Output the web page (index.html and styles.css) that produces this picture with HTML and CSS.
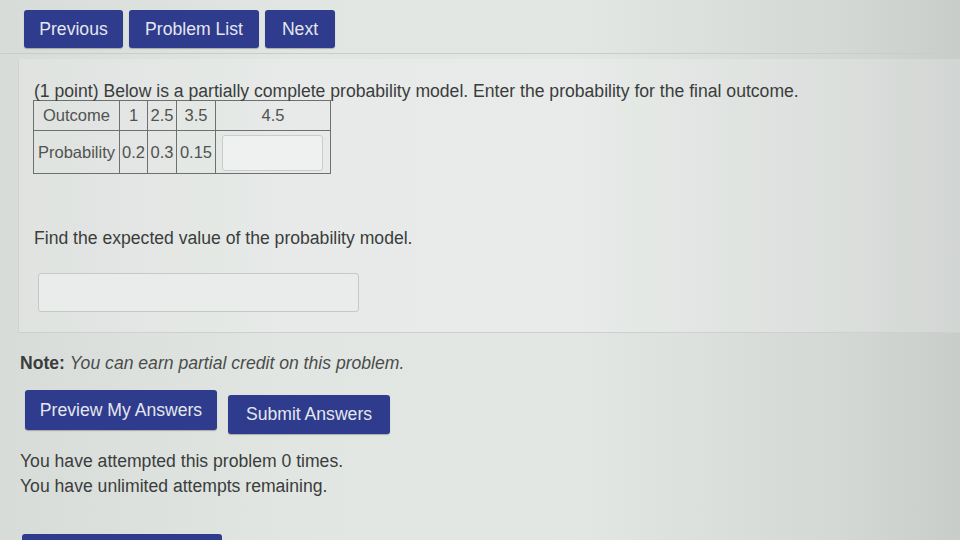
FILE: index.html
```html
<!DOCTYPE html>
<html>
<head>
<meta charset="utf-8">
<link rel="stylesheet" href="styles.css">
</head>
<body>
<div class="page">
  <nav class="nav">
    <button class="btn nav-btn prev">Previous</button>
    <button class="btn nav-btn list">Problem List</button>
    <button class="btn nav-btn next">Next</button>
  </nav>
  <section class="problem">
    <p class="intro">(1 point) Below is a partially complete probability model. Enter the probability for the final outcome.</p>
    <table class="model">
      <tr class="r1">
        <td class="c-label">Outcome</td>
        <td class="c1">1</td>
        <td class="c2">2.5</td>
        <td class="c3">3.5</td>
        <td class="c4">4.5</td>
      </tr>
      <tr class="r2">
        <td class="c-label">Probability</td>
        <td>0.2</td>
        <td>0.3</td>
        <td>0.15</td>
        <td class="c4"><input class="cell-input" type="text"></td>
      </tr>
    </table>
    <p class="find">Find the expected value of the probability model.</p>
    <input class="answer" type="text">
  </section>
  <p class="note"><b>Note:</b> <i>You can earn partial credit on this problem.</i></p>
  <div class="actions">
    <button class="btn preview">Preview My Answers</button>
    <button class="btn submit">Submit Answers</button>
  </div>
  <p class="attempts">You have attempted this problem 0 times.<br>You have unlimited attempts remaining.</p>
  <div class="bottom-btn"></div>
</div>
</body>
</html>
```
FILE: styles.css
```css
html, body {
  margin: 0;
  padding: 0;
}
body {
  width: 960px;
  height: 540px;
  overflow: hidden;
  background: linear-gradient(90deg, #d8dcd9 0%, #e2e6e3 30%, #e3e7e4 60%, #d4d8d5 88%, #c9cdca 100%);
  font-family: "Liberation Sans", Arial, sans-serif;
  color: #3a3d3c;
}
.page {
  display: flex;
  flex-direction: column;
}
.btn {
  font-family: "Liberation Sans", Arial, sans-serif;
  background: #2f3b8c;
  color: #e4e7ef;
  border: none;
  border-radius: 3px;
  font-size: 17.6px;
  padding: 0;
  box-shadow: 0 1px 1px rgba(0,0,0,0.25);
}
.nav {
  display: flex;
  gap: 6px;
  padding: 10px 0 5px 24px;
  height: 38px;
  border-bottom: 1px solid #c9cdca;
  box-sizing: content-box;
}
.nav-btn {
  height: 38px;
}
.prev { width: 99px; }
.list { width: 130px; }
.next { width: 70px; }
.problem {
  margin: 5px 0 0 18px;
  padding: 22px 0 18px 15px;
  background: rgba(255,255,255,0.18);
  border-left: 1px solid #d0d4d1;
  border-bottom: 1px solid #cdd1ce;
  height: 233px;
}
.intro {
  margin: 0;
  font-size: 17.6px;
  line-height: 20px;
}
.model {
  border-collapse: collapse;
  font-size: 16.5px;
  color: #505351;
  margin: -1px 0 0 -1px;
}
.model td {
  border: 1px solid #6c706e;
  padding: 0;
  text-align: center;
}
.r1 td { height: 29px; }
.r2 td { height: 42px; }
.c-label { width: 85px; }
.c1 { width: 27px; }
.c2 { width: 28px; }
.c3 { width: 38px; }
.c4 { width: 114px; }
.cell-input {
  width: 101px;
  height: 36px;
  box-sizing: border-box;
  border: 1px solid #c9ccca;
  border-radius: 3px;
  background: #eef1ef;
  margin: 2px 0 0 6px;
  display: block;
}
.find {
  margin: 54px 0 0 0;
  font-size: 17.6px;
}
.answer {
  display: block;
  margin: 24px 0 0 4px;
  width: 321px;
  height: 39px;
  box-sizing: border-box;
  border: 1px solid #c6c9c7;
  border-radius: 3px;
  background: #e9ecea;
}
.note {
  margin: 20px 0 0 20px;
  font-size: 17.6px;
}
.note b { color: #3a3d3c; }
.note i { color: #4a4d4c; }
.actions {
  display: flex;
  gap: 11px;
  margin: 16px 0 0 25px;
  align-items: flex-start;
}
.preview {
  width: 192px;
  height: 40px;
}
.submit {
  width: 162px;
  height: 39px;
  margin-top: 5px;
}
.attempts {
  margin: 15px 0 0 20px;
  font-size: 17.6px;
  line-height: 25px;
}
.bottom-btn {
  margin: 35px 0 0 22px;
  width: 200px;
  height: 10px;
  background: #2f3b8c;
  border-radius: 3px 3px 0 0;
}
```
